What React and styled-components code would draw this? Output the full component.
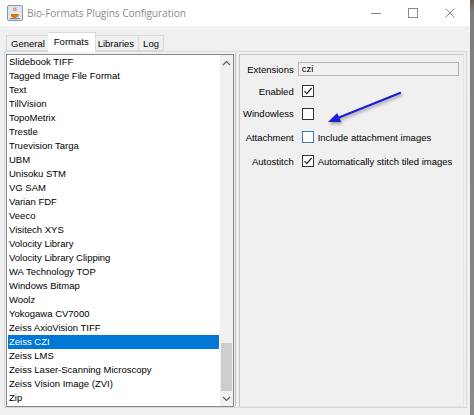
import React from "react";
import styled, { createGlobalStyle } from "styled-components";

const GlobalStyle = createGlobalStyle`
  html, body {
    margin: 0;
    padding: 0;
    background: #f0f0f0;
  }
  body {
    font-family: "Liberation Sans", Arial, sans-serif;
    font-size: 9.5px;
    color: #000;
  }
`;

const formats = [
  "Slidebook TIFF",
  "Tagged Image File Format",
  "Text",
  "TillVision",
  "TopoMetrix",
  "Trestle",
  "Truevision Targa",
  "UBM",
  "Unisoku STM",
  "VG SAM",
  "Varian FDF",
  "Veeco",
  "Visitech XYS",
  "Volocity Library",
  "Volocity Library Clipping",
  "WA Technology TOP",
  "Windows Bitmap",
  "Woolz",
  "Yokogawa CV7000",
  "Zeiss AxioVision TIFF",
  "Zeiss CZI",
  "Zeiss LMS",
  "Zeiss Laser-Scanning Microscopy",
  "Zeiss Vision Image (ZVI)",
  "Zip",
];

const tabs = ["General", "Formats", "Libraries", "Log"];

function App() {
  return (
    <>
      <GlobalStyle />
      <Screen>
        <Window>
          <TitleBar>
            <JavaIcon />
            <TitleText>Bio-Formats Plugins Configuration</TitleText>
            <Controls>
              <CtrlButton>
                <svg width="12" height="12" viewBox="0 0 12 12">
                  <path d="M1 6.5h10" stroke="#8a8a8a" strokeWidth="1" />
                </svg>
              </CtrlButton>
              <CtrlButton>
                <svg width="12" height="12" viewBox="0 0 12 12">
                  <rect x="1.5" y="1.5" width="9" height="9" fill="none" stroke="#8a8a8a" strokeWidth="1" />
                </svg>
              </CtrlButton>
              <CtrlButton>
                <svg width="12" height="12" viewBox="0 0 12 12">
                  <path d="M1.5 1.5l9 9M10.5 1.5l-9 9" stroke="#8a8a8a" strokeWidth="1" />
                </svg>
              </CtrlButton>
            </Controls>
          </TitleBar>

          <TabStrip>
            {tabs.map((t) => (
              <Tab key={t} $active={t === "Formats"}>
                {t}
              </Tab>
            ))}
          </TabStrip>

          <TabPanel>
            <ListBox>
              <ListItems>
                {formats.map((f) => (
                  <Item key={f} $selected={f === "Zeiss CZI"}>
                    {f}
                  </Item>
                ))}
              </ListItems>
              <ScrollBar>
                <ScrollArrow>
                  <svg width="9" height="6" viewBox="0 0 9 6">
                    <path d="M1 5l3.5-3.5L8 5" fill="none" stroke="#606060" strokeWidth="1.2" />
                  </svg>
                </ScrollArrow>
                <Track>
                  <Thumb style={{ top: 273, height: 48 }} />
                </Track>
                <ScrollArrow>
                  <svg width="9" height="6" viewBox="0 0 9 6">
                    <path d="M1 1l3.5 3.5L8 1" fill="none" stroke="#606060" strokeWidth="1.2" />
                  </svg>
                </ScrollArrow>
              </ScrollBar>
            </ListBox>

            <Divider />

            <OptionsPanel>
              <FormGrid>
                <Label>Extensions</Label>
                <Field>czi</Field>

                <Label>Enabled</Label>
                <CheckRow>
                  <CheckBox checked />
                </CheckRow>

                <Label>Windowless</Label>
                <CheckRow>
                  <CheckBox />
                </CheckRow>

                <Label>Attachment</Label>
                <CheckRow>
                  <CheckBox hover />
                  <CheckText>Include attachment images</CheckText>
                </CheckRow>

                <Label>Autostitch</Label>
                <CheckRow>
                  <CheckBox checked />
                  <CheckText>Automatically stitch tiled images</CheckText>
                </CheckRow>
              </FormGrid>
            </OptionsPanel>
          </TabPanel>

          <Pointer />
        </Window>
        <Edge />
      </Screen>
    </>
  );
}

export default App;

function JavaIcon() {
  return (
    <IconWrap>
      <svg width="16" height="16" viewBox="0 0 16 16">
        <rect x="0.5" y="0.5" width="15" height="15" rx="1.5" fill="#dde7f1" stroke="#8797ab" />
        <path d="M4 9h7v1.5c0 1.6-1.4 2.5-3.5 2.5S4 12.1 4 10.5z" fill="#e76f00" />
        <path d="M11 9.6c1.4 0 1.4 1.8 0 1.8" fill="none" stroke="#e76f00" strokeWidth="0.9" />
        <path d="M7 3c-1 1 1 1.8 0 3.2M8.8 2.5c-1 1 1 1.8 0 3.4" fill="none" stroke="#d24a2a" strokeWidth="0.9" />
        <path d="M3 13.6h10" stroke="#5382a1" strokeWidth="1" />
      </svg>
    </IconWrap>
  );
}

function CheckBox({ checked, hover }) {
  return (
    <Box $hover={hover}>
      {checked && (
        <svg width="10" height="10" viewBox="0 0 10 10">
          <path d="M1.5 5.2l2.3 2.4L8.6 2" fill="none" stroke="#222" strokeWidth="1.2" />
        </svg>
      )}
    </Box>
  );
}

function Pointer() {
  return (
    <ArrowOverlay width="90" height="45" viewBox="0 0 90 45">
      <path d="M80 8L19 32.5" stroke="#1f1fd8" strokeWidth="2.4" strokeLinecap="round" />
      <path d="M8 37L21.2 36.9L17.2 27.9z" fill="#1f1fd8" />
    </ArrowOverlay>
  );
}

const Screen = styled.div`
  display: flex;
  width: 474px;
  height: 415px;
  overflow: hidden;
`;

const Window = styled.div`
  position: relative;
  width: 470px;
  height: 415px;
  background: #f0f0f0;
  display: flex;
  flex-direction: column;
`;

const Edge = styled.div`
  width: 4px;
  background: linear-gradient(#6e5a44 0, #7d7d7d 12px, #8a8a8a 100%);
`;

const TitleBar = styled.div`
  height: 26px;
  background: #fff;
  display: flex;
  align-items: center;
  padding-left: 7px;
  flex-shrink: 0;
`;

const IconWrap = styled.div`
  width: 16px;
  height: 16px;
  display: flex;
`;

const TitleText = styled.div`
  margin-left: 4px;
  font-family: "Open Sans", "Noto Sans", sans-serif;
  font-size: 10.2px;
  color: #8c8c8c;
  letter-spacing: -0.1px;
`;

const Controls = styled.div`
  margin-left: auto;
  display: flex;
  height: 100%;
  margin-right: 2px;
`;

const CtrlButton = styled.div`
  width: 37px;
  display: flex;
  align-items: center;
  justify-content: center;
`;

const TabStrip = styled.div`
  height: 25px;
  display: flex;
  align-items: flex-end;
  padding-left: 6px;
  flex-shrink: 0;
  position: relative;
  z-index: 1;
`;

const Tab = styled.div`
  height: ${(p) => (p.$active ? "20px" : "16px")};
  padding: 0 ${(p) => (p.$active ? "6px" : "4px")};
  margin: 0 ${(p) => (p.$active ? "-2px" : "0")};
  box-sizing: border-box;
  display: flex;
  align-items: ${(p) => (p.$active ? "flex-start" : "center")};
  padding-top: ${(p) => (p.$active ? "3px" : "0")};
  background: ${(p) => (p.$active ? "#fff" : "#f0f0f0")};
  border: 1px solid #d9d9d9;
  border-bottom: ${(p) => (p.$active ? "none" : "1px solid #d9d9d9")};
  margin-bottom: ${(p) => (p.$active ? "-1px" : "0")};
  position: relative;
  z-index: ${(p) => (p.$active ? 2 : 1)};
  white-space: nowrap;
  & + & {
    border-left: none;
  }
`;

const TabPanel = styled.div`
  margin-left: 4px;
  width: 463px;
  height: 357px;
  box-sizing: border-box;
  border: 1px solid #d9d9d9;
  padding: 1px 2px 1px 1px;
  display: flex;
`;

const ListBox = styled.div`
  width: 228px;
  box-sizing: border-box;
  border: 1px solid #828790;
  background: #fff;
  display: flex;
  padding: 0 0 0 1px;
  margin-top: 1px;
  height: 353px;
`;

const ListItems = styled.div`
  flex: 1;
  overflow: hidden;
`;

const Item = styled.div`
  height: 14px;
  line-height: 14px;
  padding-left: 1px;
  margin-right: 1px;
  white-space: nowrap;
  background: ${(p) => (p.$selected ? "#0078d7" : "transparent")};
  color: ${(p) => (p.$selected ? "#fff" : "#000")};
`;

const ScrollBar = styled.div`
  width: 13px;
  background: #f0f0f0;
  display: flex;
  flex-direction: column;
`;

const ScrollArrow = styled.div`
  height: 15px;
  display: flex;
  align-items: center;
  justify-content: center;
`;

const Track = styled.div`
  flex: 1;
  position: relative;
`;

const Thumb = styled.div`
  position: absolute;
  left: 1px;
  right: 1px;
  background: #cdcdcd;
`;

const Divider = styled.div`
  width: 4px;
  box-sizing: border-box;
  margin-left: 1px;
  border-left: 1px solid #bdbdbd;
`;

const OptionsPanel = styled.div`
  flex: 1;
  box-sizing: border-box;
  border: 1px solid #c2c2c2;
  border-right-color: #e4e4e4;
  border-bottom-color: #e4e4e4;
  margin-top: 1px;
  height: 353px;
  padding: 3px 4px 0 3px;
`;

const FormGrid = styled.div`
  display: grid;
  grid-template-columns: auto 1fr;
  grid-template-rows: 22px 22px 23px 24px 24px;
  column-gap: 4px;
  align-items: center;
`;

const Label = styled.div`
  text-align: right;
  white-space: nowrap;
`;

const Field = styled.div`
  height: 14px;
  box-sizing: border-box;
  border: 1px solid #b4b4b4;
  background: #f0f0f0;
  padding-left: 3px;
  line-height: 12px;
`;

const CheckRow = styled.div`
  display: flex;
  align-items: center;
  padding-left: 4px;
`;

const Box = styled.div`
  width: 12px;
  height: 12px;
  box-sizing: border-box;
  border: 1px solid ${(p) => (p.$hover ? "#3d7ab3" : "#333")};
  background: #fff;
  display: flex;
  align-items: center;
  justify-content: center;
`;

const CheckText = styled.div`
  margin-left: 4px;
  white-space: nowrap;
`;

const ArrowOverlay = styled.svg`
  position: absolute;
  left: 320px;
  top: 85px;
  filter: drop-shadow(1px 2px 1.5px rgba(0, 0, 0, 0.35));
  pointer-events: none;
`;
